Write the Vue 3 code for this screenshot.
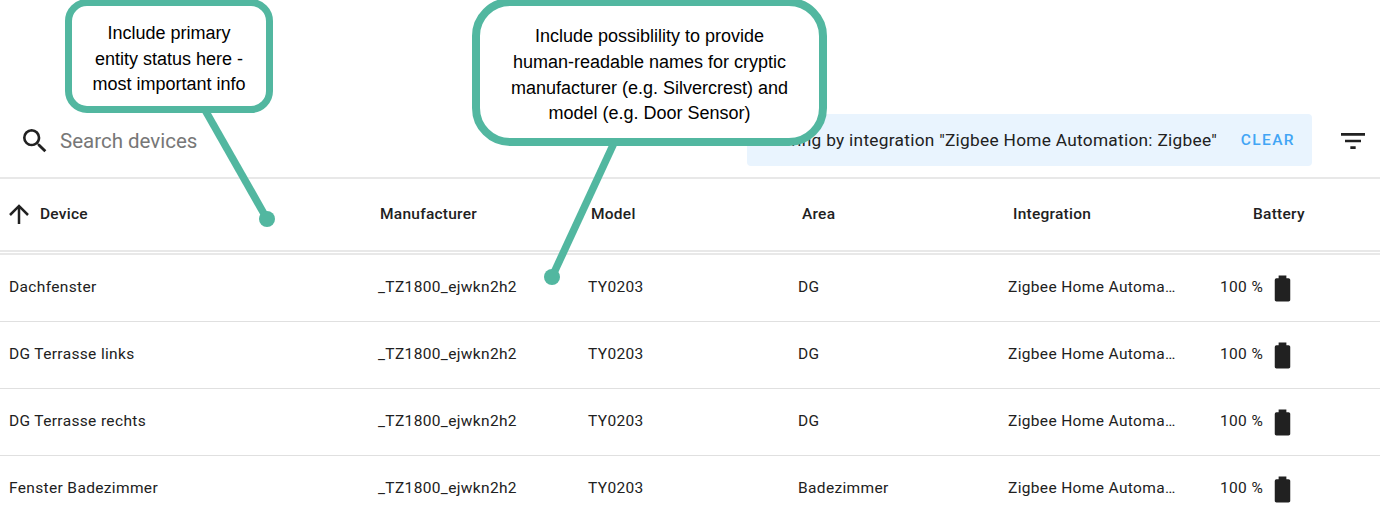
<template>
  <div class="page">
    <div class="toolbar">
      <svg class="search-icon" viewBox="0 0 24 24" width="32" height="32">
        <path d="M9.5 3A6.5 6.5 0 0 1 16 9.5c0 1.61-.59 3.09-1.56 4.23l.27.27h.79l5 5-1.5 1.5-5-5v-.79l-.27-.27A6.52 6.52 0 0 1 9.5 16 6.5 6.5 0 0 1 3 9.5 6.5 6.5 0 0 1 9.5 3m0 2C7 5 5 7 5 9.5S7 14 9.5 14 14 12 14 9.5 12 5 9.5 5Z" />
      </svg>
      <span class="search-text">Search devices</span>
      <div class="filter-chip">
        <span class="filter-text">Filtering by integration "Zigbee Home Automation: Zigbee"</span>
        <span class="clear">CLEAR</span>
      </div>
      <svg class="filter-icon" viewBox="0 0 24 24" width="32" height="32">
        <path d="M6 13h12v-2H6M3 6v2h18V6M10 18h4v-2h-4v2Z" />
      </svg>
    </div>

    <div class="head-row">
      <div class="head-cell first">
        <svg viewBox="0 0 24 24" width="30" height="30">
          <path d="M13 20h-2V8l-5.5 5.5-1.42-1.42L12 4.16l7.92 7.92-1.42 1.42L13 8v12Z" />
        </svg>
        <span>Device</span>
      </div>
      <div class="head-cell">Manufacturer</div>
      <div class="head-cell">Model</div>
      <div class="head-cell">Area</div>
      <div class="head-cell">Integration</div>
      <div class="head-cell">Battery</div>
    </div>

    <div class="rows">
      <div v-for="row in rows" :key="row.name" class="row">
        <div class="cell">{{ row.name }}</div>
        <div class="cell">_TZ1800_ejwkn2h2</div>
        <div class="cell">TY0203</div>
        <div class="cell">{{ row.area }}</div>
        <div class="cell ellipsis">Zigbee Home Automation</div>
        <div class="cell battery">
          <span>100 %</span>
          <svg viewBox="0 0 24 24" width="31" height="31">
            <path d="M16.67 4H15V2H9v2H7.33A1.33 1.33 0 0 0 6 5.33v15.34C6 21.4 6.6 22 7.33 22h9.34c.73 0 1.33-.6 1.33-1.33V5.33C18 4.6 17.4 4 16.67 4Z" />
          </svg>
        </div>
      </div>
    </div>

    <svg class="pointers" width="1380" height="520" viewBox="0 0 1380 520">
      <line x1="205" y1="110" x2="267" y2="219" />
      <circle cx="267" cy="219" r="8" />
      <line x1="614" y1="143" x2="552" y2="277" />
      <circle cx="552" cy="277" r="8" />
    </svg>
    <div class="note note-status">Include primary<br />entity status here -<br />most important info</div>
    <div class="note note-names">
      Include possiblility to provide<br />human-readable names for cryptic<br />manufacturer (e.g. Silvercrest) and<br />model (e.g. Door Sensor)
    </div>
  </div>
</template>

<script setup>
const rows = [
  { name: 'Dachfenster', area: 'DG' },
  { name: 'DG Terrasse links', area: 'DG' },
  { name: 'DG Terrasse rechts', area: 'DG' },
  { name: 'Fenster Badezimmer', area: 'Badezimmer' },
]
</script>

<style>
html,
body {
  margin: 0;
  background: #fff;
  overflow: hidden;
}
</style>

<style scoped>
.page {
  position: relative;
  width: 1380px;
  height: 520px;
  overflow: hidden;
  font-family: Roboto, "Liberation Sans", sans-serif;
  color: #212121;
}

.toolbar {
  display: flex;
  align-items: center;
  height: 72px;
  padding-top: 105px;
  border-bottom: 2px solid #e8e8e8;
}

.search-icon {
  margin-left: 19px;
  fill: #212121;
}

.search-text {
  margin-left: 9px;
  font-size: 20.5px;
  color: #777;
  flex: 1;
}

.filter-chip {
  display: flex;
  align-items: center;
  justify-content: space-between;
  box-sizing: border-box;
  width: 565px;
  height: 52px;
  margin-top: -2px;
  padding: 0 17px 0 10px;
  background: #e9f4fe;
  border-radius: 4px;
}

.filter-text {
  font-size: 17.3px;
  letter-spacing: 0.28px;
}

.clear {
  font-size: 15.5px;
  font-weight: 500;
  letter-spacing: 1.4px;
  color: #42a5f5;
}

.filter-icon {
  margin: 0 11px 0 25px;
  fill: #212121;
}

.head-row {
  display: grid;
  grid-template-columns: 371px 211px 211px 211px 240px 1fr;
  align-items: center;
  height: 70px;
  padding-left: 9px;
  padding-bottom: 1px;
  border-bottom: 2px solid #e8e8e8;
}

.head-cell {
  display: flex;
  align-items: center;
  font-size: 15.5px;
  font-weight: 500;
  letter-spacing: 0.25px;
}

.head-cell svg {
  margin-left: -5px;
  margin-right: 6px;
  fill: #212121;
}

.rows {
  margin-top: 1px;
  border-top: 2px solid #e8e8e8;
}

.row {
  display: grid;
  grid-template-columns: 369px 210px 210px 210px 212px 1fr;
  align-items: center;
  height: 64px;
  padding: 0 0 2px 9px;
  border-bottom: 1px solid #e0e0e0;
}

.cell {
  font-size: 15.5px;
  letter-spacing: 0.35px;
  white-space: nowrap;
}

.ellipsis {
  width: 168px;
  overflow: hidden;
  text-overflow: ellipsis;
}

.battery {
  display: flex;
  align-items: center;
  gap: 4px;
}

.battery svg {
  margin-top: 3px;
  fill: #212121;
}

.pointers {
  position: absolute;
  left: 0;
  top: 0;
}

.pointers line {
  stroke: #52b7a0;
  stroke-width: 7.5;
}

.pointers circle {
  fill: #52b7a0;
}

.note {
  position: absolute;
  box-sizing: border-box;
  display: flex;
  align-items: center;
  justify-content: center;
  text-align: center;
  background: #fff;
  border: 7px solid #52b7a0;
  font-family: "Liberation Sans", Arial, sans-serif;
  font-size: 18px;
  line-height: 25.7px;
  color: #000;
}

.note-status {
  left: 65px;
  top: -1px;
  width: 208px;
  height: 114px;
  padding-top: 7px;
  border-radius: 22px;
}

.note-names {
  left: 472px;
  top: -2px;
  width: 355px;
  height: 148px;
  padding-top: 7px;
  border-width: 8px;
  border-radius: 38px;
}
</style>
